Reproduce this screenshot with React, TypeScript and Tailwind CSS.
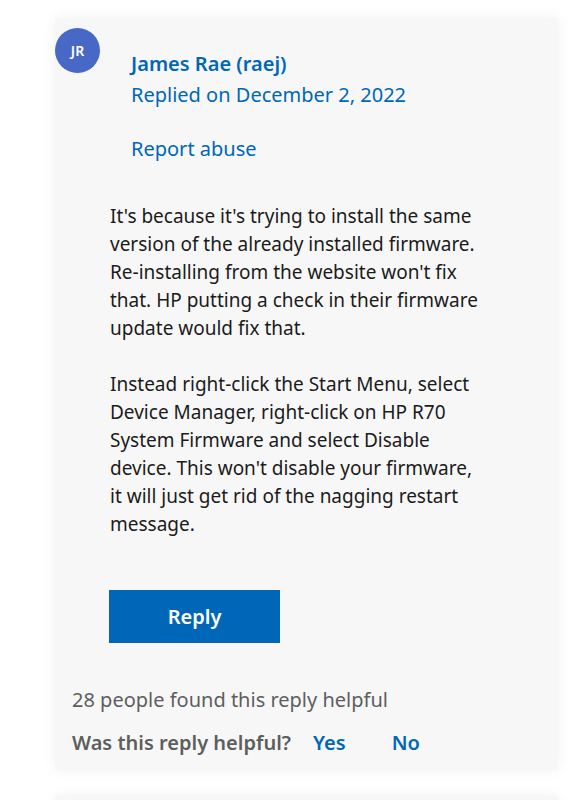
export default function App() {
  return (
    <div className="min-h-[800px] bg-white pt-[18px] font-['Noto_Sans',sans-serif]">
      {/* reply card */}
      <div className="ml-[55px] w-[503px] bg-[#f7f7f7] pt-[10px] pb-[13px] shadow-[0_0_14px_rgba(0,0,0,0.06)]">
        <div className="flex">
          <div className="flex h-[45px] w-[45px] shrink-0 items-center justify-center rounded-full bg-[#4768c6] text-[14px] font-semibold text-white">
            JR
          </div>
          <div className="ml-[31px] mt-[21px] flex flex-col">
            <span className="text-[20px] font-semibold leading-[30px] text-[#0067b8]">James Rae (raej)</span>
            <span className="mt-[1px] text-[20px] leading-[30px] text-[#0067b8]">Replied on December 2, 2022</span>
            <span className="mt-[24px] text-[20px] leading-[30px] text-[#0067b8]">Report abuse</span>
          </div>
        </div>

        <div className="mt-[38px] pl-[55px] pr-[74px] text-[19px] leading-[28px] text-[#1b1b1b]">
          <p>
            It's because it's trying to install the same version of the already installed firmware. Re-installing from the website won't fix that. HP putting a check in their firmware update would fix that.
          </p>
          <p className="mt-[28px]">
            Instead right-click the Start Menu, select Device Manager, right-click on HP R70 System Firmware and select Disable device. This won't disable your firmware, it will just get rid of the nagging restart message.
          </p>
        </div>

        <div className="mt-[52px] pl-[54px]">
          <button className="h-[53px] w-[171px] bg-[#0067b8] text-[20px] font-semibold text-white">Reply</button>
        </div>

        <div className="mt-[43px] pl-[17px] text-[20px] leading-[28px] text-[#5e5e5e]">28 people found this reply helpful</div>
        <div className="mt-[15px] flex items-center pl-[17px] text-[20px] font-semibold leading-[28px]">
          <span className="text-[#5e5e5e]">Was this reply helpful?</span>
          <button className="ml-[22px] text-[#0067b8]">Yes</button>
          <button className="ml-[46px] text-[#0067b8]">No</button>
        </div>
      </div>

      {/* next card */}
      <div className="ml-[55px] mt-[26px] h-[40px] w-[503px] bg-[#f7f7f7] shadow-[0_0_14px_rgba(0,0,0,0.06)]" />
    </div>
  );
}
